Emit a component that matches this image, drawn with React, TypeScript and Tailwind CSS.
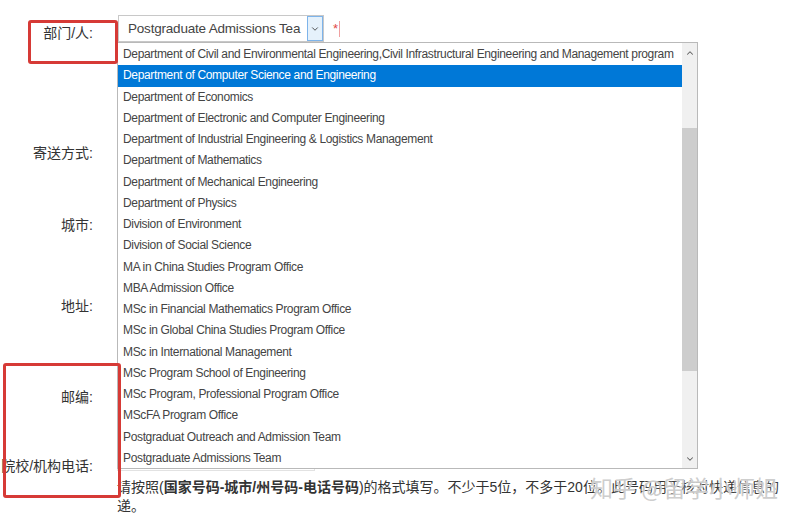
import { ChevronDown, ChevronUp } from 'lucide-react';

const options = [
  'Department of Civil and Environmental Engineering,Civil Infrastructural Engineering and Management program',
  'Department of Computer Science and Engineering',
  'Department of Economics',
  'Department of Electronic and Computer Engineering',
  'Department of Industrial Engineering & Logistics Management',
  'Department of Mathematics',
  'Department of Mechanical Engineering',
  'Department of Physics',
  'Division of Environment',
  'Division of Social Science',
  'MA in China Studies Program Office',
  'MBA Admission Office',
  'MSc in Financial Mathematics Program Office',
  'MSc in Global China Studies Program Office',
  'MSc in International Management',
  'MSc Program School of Engineering',
  'MSc Program, Professional Program Office',
  'MScFA Program Office',
  'Postgraduat Outreach and Admission Team',
  'Postgraduate Admissions Team',
];

const cjk = "font-['Liberation_Sans','Noto_Sans_CJK_SC',sans-serif]";

function Label({ text, className = '' }: { text: string; className?: string }) {
  return (
    <div className={`w-[93px] shrink-0 text-right whitespace-nowrap text-[14px] leading-[20px] text-[#333] ${className}`}>
      {text}
    </div>
  );
}

export default function App() {
  return (
    <div className={`relative w-[800px] h-[518px] overflow-hidden bg-white ${cjk}`}>
      <div className="flex flex-col pt-[15px]">
        <div className="flex items-start h-[27px]">
          <Label text="部门/人:" className="mt-[8px]" />
          <div className="ml-[25px] flex items-center">
            <div className="flex items-stretch w-[206px] h-[27px] border border-[#c8c8c8] bg-white">
              <div className="flex-1 pl-[9px] text-[13.5px] tracking-[-0.2px] leading-[25px] text-[#444] overflow-hidden whitespace-nowrap">
                Postgraduate Admissions Tea
              </div>
              <div className="w-[16px] flex items-center justify-center bg-[#e5f1fb] border border-[#7eb4ea]">
                <ChevronDown size={10} strokeWidth={2} className="text-[#333]" />
              </div>
            </div>
            <span className="ml-[9px] text-[#e04848] text-[13px] leading-none">*</span>
            <span className="ml-[1px] w-[1px] h-[16px] bg-[#f0a0a0]" />
          </div>
        </div>
        <div className="flex mt-[101px]">
          <Label text="寄送方式:" />
        </div>
        <div className="flex mt-[52px]">
          <Label text="城市:" />
        </div>
        <div className="flex mt-[61px]">
          <Label text="地址:" />
        </div>
        <div className="flex mt-[71px]">
          <Label text="邮编:" />
        </div>
        <div className="flex items-center mt-[40px] h-[24px]">
          <Label text="院校/机构电话:" className="-ml-[3px] w-[96px] mt-[14px]" />
          <div className="ml-[24px] w-[198px] h-[24px] border border-[#e2e2e2]" />
        </div>
        <div className="ml-[117px] mt-[7px] whitespace-nowrap text-[14px] leading-[19px] text-[#333]">
          请按照(<b>国家号码-城市/州号码-电话号码</b>)的格式填写。不少于5位，不多于20位。此号码用于核对快递信息的
          <br />
          递。
        </div>
      </div>

      {/* open dropdown list */}
      <div className="absolute left-[117px] top-[42px] w-[581px] h-[427px] border border-[#b9b9b9] bg-white flex">
        <div className="flex-1 pt-[1px] font-['Liberation_Sans',sans-serif] text-[12px] tracking-[-0.35px] text-[#444]">
          {options.map((o, i) => (
            <div
              key={o}
              className={`h-[21.25px] leading-[21.25px] pl-[5px] whitespace-nowrap ${i === 1 ? 'bg-[#0078d7] text-white' : ''}`}
            >
              {o}
            </div>
          ))}
        </div>
        <div className="w-[15px] bg-[#f0f0f0] flex flex-col items-center">
          <ChevronUp size={10} strokeWidth={2.5} className="text-[#606060] mt-[5px]" />
          <div className="w-full h-[243px] mt-[70px] bg-[#cdcdcd]" />
          <ChevronDown size={10} strokeWidth={2.5} className="text-[#606060] mt-auto mb-[4px]" />
        </div>
      </div>

      {/* annotation boxes */}
      <div className="absolute left-[28px] top-[20px] w-[90px] h-[44px] border-[3px] border-[#d63a36] rounded-[3px]" />
      <div className="absolute left-[3px] top-[363px] w-[118px] h-[135px] border-[3px] border-[#d63a36] rounded-[3px]" />

      {/* watermark */}
      <div className="absolute left-[590px] top-[473px] text-[23px] leading-[28px] text-[#c8c8c8]/90 font-['Noto_Sans_CJK_SC',sans-serif] [text-shadow:0_0_2px_white]">
        知乎 @留学小师姐
      </div>
    </div>
  );
}
